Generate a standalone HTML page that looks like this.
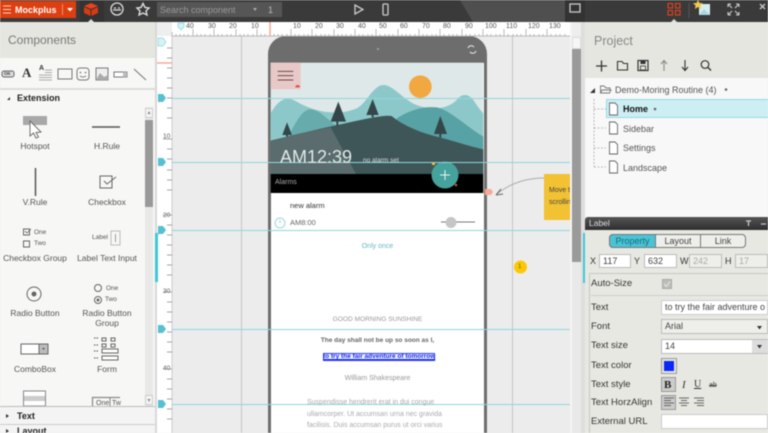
<!DOCTYPE html>
<html><head><meta charset="utf-8">
<style>
html,body{margin:0;padding:0;background:#eee;overflow:hidden;width:768px;height:433px}
#r{position:relative;width:768px;height:433px;overflow:hidden;font-family:"Liberation Sans",sans-serif;font-size:9px;color:#444;filter:blur(.45px)}
.b{position:absolute}
.t{position:absolute;white-space:nowrap;line-height:12px}
.c{position:absolute;white-space:nowrap;line-height:12px;text-align:center;color:#555;font-size:8.5px}
.in{position:absolute;background:#fff;border:1px solid #bbb;box-sizing:border-box;font-size:9px;line-height:12px;padding-left:3px;color:#444;white-space:nowrap;overflow:hidden}
svg{position:absolute;left:0;top:0}
.lb{position:absolute;left:591px;white-space:nowrap;font-size:9.5px;line-height:12px;color:#333}
.rl{position:absolute;top:22px;font-size:7px;line-height:10px;color:#555;white-space:nowrap}
.rv{position:absolute;left:163px;font-size:6.5px;line-height:8px;color:#555}
</style></head><body><div id="r">

<!-- top bar -->
<div class="b" style="left:0;top:0;width:768px;height:22px;background:#3a3a3a"></div>
<div class="b" style="left:460px;top:0;width:105px;height:22px;background:#4f4f4f;clip-path:polygon(0 0,100% 0,100% 100%,13px 100%)"></div>
<div class="b" style="left:565px;top:0;width:20px;height:22px;background:#333"></div>
<div class="b" style="left:0;top:1px;width:76px;height:17px;background:#dd3f10"></div>
<div class="b" style="left:62px;top:4px;width:1px;height:11px;background:#f09070"></div>
<div class="t" style="left:15px;top:4px;color:#fff;font-weight:bold;font-size:9px">Mockplus</div>
<div class="b" style="left:80px;top:0;width:24px;height:22px;background:#333"></div>
<div class="b" style="left:157px;top:2px;width:103px;height:15px;background:#565656"></div>
<div class="t" style="left:160px;top:4px;color:#999;font-size:9px">Search component</div>
<div class="b" style="left:260px;top:2px;width:22px;height:15px;background:#555"></div>
<div class="t" style="left:268px;top:4px;color:#bbb;font-size:9px">1</div>

<!-- left panel -->
<div class="b" style="left:0;top:22px;width:155px;height:411px;background:#f7f7f5"></div>
<div class="b" style="left:0;top:22px;width:155px;height:36px;background:#e6e6e0"></div>
<div class="t" style="left:8px;top:33px;font-size:12px;line-height:14px;color:#777">Components</div>
<div class="b" style="left:0;top:88px;width:155px;height:2px;background:#ddd"></div>
<div class="t" style="left:17px;top:92px;font-weight:bold;color:#222;font-size:9px">Extension</div>
<div class="b" style="left:145px;top:107px;width:8px;height:299px;background:#e8e8e6"></div>
<div class="b" style="left:145px;top:120px;width:8px;height:87px;background:#999"></div>
<div class="b" style="left:145px;top:108px;width:8px;height:10px;background:#f4f4f4;border:1px solid #ccc;box-sizing:border-box"></div>
<div class="b" style="left:145px;top:395px;width:8px;height:10px;background:#f4f4f4;border:1px solid #ccc;box-sizing:border-box"></div>

<div class="c" style="left:0;top:140px;width:70px">Hotspot</div>
<div class="c" style="left:72px;top:140px;width:70px">H.Rule</div>
<div class="c" style="left:0;top:196px;width:70px">V.Rule</div>
<div class="c" style="left:72px;top:196px;width:70px">Checkbox</div>
<div class="c" style="left:0;top:252px;width:70px">Checkbox Group</div>
<div class="c" style="left:72px;top:252px;width:70px">Label Text Input</div>
<div class="c" style="left:0;top:307px;width:70px">Radio Button</div>
<div class="c" style="left:72px;top:307px;width:70px">Radio Button</div>
<div class="c" style="left:72px;top:317px;width:70px">Group</div>
<div class="c" style="left:0;top:363px;width:70px">ComboBox</div>
<div class="c" style="left:72px;top:363px;width:70px">Form</div>
<div class="t" style="left:34px;top:227px;font-size:6.5px;color:#555">One</div>
<div class="t" style="left:34px;top:238px;font-size:6.5px;color:#555">Two</div>
<div class="t" style="left:92px;top:232px;font-size:6.5px;color:#555">Label</div>
<div class="t" style="left:106px;top:283px;font-size:6.5px;color:#555">One</div>
<div class="t" style="left:105px;top:294px;font-size:6.5px;color:#555">Two</div>

<!-- component toolbar and grid icons -->
<svg width="768" height="433" viewBox="0 0 768 433">
<rect x="2" y="71" width="12" height="6" rx="2" fill="#ddd" stroke="#666"/>
<rect x="58" y="69" width="14" height="10" fill="none" stroke="#777"/>
<rect x="77" y="68" width="12" height="12" rx="3" fill="none" stroke="#777"/>
<circle cx="80.5" cy="72.5" r=".8" fill="#666"/><circle cx="85.5" cy="72.5" r=".8" fill="#666"/>
<path d="M80 76Q83 78 86 76" fill="none" stroke="#666" stroke-width=".8"/>
<rect x="96" y="68" width="12" height="12" fill="#eee" stroke="#777"/>
<path d="M96 80L100 73L104 77L108 75V80Z" fill="#aaa"/>
<rect x="114" y="72" width="13" height="5" fill="#fff" stroke="#777"/>
<rect x="123" y="72" width="4" height="5" fill="#bbb"/>
<path d="M134 69L146 80" stroke="#777" stroke-width="1"/>
<path d="M45 70H52M45 72.5H52M39 75H52M39 77.5H52M39 80H52" stroke="#aaa" stroke-width="1"/>
<path d="M7 100L10 97V100Z" fill="#333"/>
<rect x="23" y="116" width="24" height="9" fill="#a8a8a8"/>
<path d="M30 121V136L33.5 133L36 138L38.5 137L36 132.5L41 132Z" fill="#fff" stroke="#666" stroke-width=".9"/>
<path d="M92 127H120" stroke="#555" stroke-width="1.5"/>
<path d="M35.5 168V196" stroke="#555" stroke-width="1.5"/>
<rect x="100" y="176" width="12" height="12" fill="none" stroke="#666"/>
<path d="M104 181L107 184L116 177" fill="none" stroke="#666" stroke-width="1"/>
<rect x="23.5" y="229" width="6" height="6" fill="none" stroke="#666"/><path d="M25 231L27 233L31 229" fill="none" stroke="#666" stroke-width=".8"/>
<rect x="23.5" y="241" width="6" height="6" fill="none" stroke="#666"/>
<rect x="111" y="231" width="9" height="14" fill="none" stroke="#bbb"/><path d="M115.5 234V242" stroke="#999"/>
<circle cx="34" cy="294" r="7" fill="none" stroke="#666"/><circle cx="34" cy="294" r="2.5" fill="#666"/>
<circle cx="98" cy="288" r="3.5" fill="none" stroke="#666"/>
<circle cx="98" cy="300" r="3.5" fill="none" stroke="#666"/><circle cx="98" cy="300" r="1.5" fill="#666"/>
<rect x="21" y="344" width="27" height="10" fill="#fff" stroke="#666"/><rect x="39" y="344" width="9" height="10" fill="#bbb" stroke="#666"/>
<path d="M42 348H45L43.5 350Z" fill="#555"/>
<path d="M94 338H98M94 345H98M94 351H98M94 358H98" stroke="#555" stroke-width="1" stroke-dasharray="1.5 1"/>
<rect x="102" y="338" width="4" height="3" fill="none" stroke="#666"/><rect x="111" y="338" width="4" height="3" fill="none" stroke="#666"/>
<rect x="102" y="344" width="4" height="3" fill="none" stroke="#666"/><rect x="111" y="344" width="4" height="3" fill="none" stroke="#666"/>
<rect x="102" y="349" width="16" height="4" fill="#fff" stroke="#666"/>
<rect x="102" y="356" width="16" height="4" fill="#fff" stroke="#666"/>
<rect x="23.5" y="391" width="22" height="15" fill="#fff" stroke="#888"/><rect x="24" y="396" width="21" height="5" fill="#ccc"/>
<path d="M92.5 406V397.5H120" fill="none" stroke="#888" stroke-width="1.2"/>
<path d="M110 398V406" stroke="#888"/>
<path d="M147.5 114L149 111L150.5 114Z" fill="#888"/>
<path d="M147.5 399L149 402L150.5 399Z" fill="#888"/>
</svg>
<div class="t" style="left:96px;top:398px;font-size:7px;color:#555;height:8px;overflow:hidden">One</div>
<div class="t" style="left:112px;top:398px;font-size:7px;color:#555;height:8px;overflow:hidden">Tw</div>

<div class="b" style="left:0;top:406px;width:155px;height:1px;background:#bbb"></div>
<div class="b" style="left:0;top:407px;width:155px;height:17px;background:#f4f4f4"></div>
<div class="b" style="left:0;top:424px;width:155px;height:1px;background:#ccc"></div>
<div class="b" style="left:0;top:425px;width:155px;height:8px;background:#f4f4f4"></div>
<div class="t" style="left:17px;top:410px;font-weight:bold;color:#222">Text</div>
<div class="t" style="left:17px;top:425px;font-weight:bold;color:#222;height:8px;overflow:hidden">Layout</div>

<div class="b" style="left:155px;top:22px;width:2px;height:411px;background:#d8d8d8"></div>

<!-- canvas -->
<div class="b" style="left:157px;top:22px;width:415px;height:411px;background:#ececec"></div>
<div class="b" style="left:157px;top:22px;width:15px;height:411px;background:#fff"></div>
<div class="b" style="left:157px;top:22px;width:415px;height:14px;background:#fff"></div>
<div class="b" style="left:157px;top:22px;width:15px;height:14px;background:#eee"></div>
<div class="b" style="left:241px;top:36px;width:1px;height:397px;background:#c4c4c4"></div>
<div class="b" style="left:512px;top:36px;width:1px;height:397px;background:#c4c4c4"></div>

<!-- ruler labels -->
<div class="rl" style="left:186px">40</div>
<div class="rl" style="left:208px">30</div>
<div class="rl" style="left:229px">20</div>
<div class="rl" style="left:251px">10</div>
<div class="rl" style="left:293px">10</div>
<div class="rl" style="left:315px">20</div>
<div class="rl" style="left:336px">30</div>
<div class="rl" style="left:358px">40</div>
<div class="rl" style="left:379px">50</div>
<div class="rl" style="left:400px">60</div>
<div class="rl" style="left:422px">70</div>
<div class="rl" style="left:443px">80</div>
<div class="rl" style="left:465px">90</div>
<div class="rl" style="left:485px">100</div>
<div class="rl" style="left:506px">110</div>
<div class="rl" style="left:528px">120</div>
<div class="rl" style="left:549px">130</div>
<div class="rv" style="top:133px">10</div>
<div class="rv" style="top:212px">20</div>
<div class="rv" style="top:288px">30</div>
<div class="rv" style="top:365px">40</div>

<!-- phone -->
<div class="b" style="left:268px;top:36px;width:219px;height:397px;background:#6d6d6d;border-radius:18px 18px 0 0"></div>
<div class="b" style="left:271px;top:63px;width:213px;height:370px;background:#fff"></div>
<div class="b" style="left:377px;top:48px;width:2px;height:2px;background:#aaa;border-radius:50%"></div>

<svg width="768" height="433" viewBox="0 0 768 433">
<!-- ruler ticks -->
<path d="M172 36H570" stroke="#bbb" stroke-width="1"/>
<path d="M172 36V32M176 36V34M180 36V34M184 36V34M188 36V34M193 36V29M197 36V34M201 36V34M205 36V34M210 36V34M214 36V29M218 36V34M222 36V34M227 36V34M231 36V34M236 36V29M240 36V34M244 36V34M248 36V34M253 36V34M257 36V29M261 36V34M265 36V34M270 36V34M274 36V34M278 36V34M282 36V34M287 36V34M291 36V29M295 36V34M299 36V34M304 36V34M308 36V34M312 36V29M316 36V34M321 36V34M325 36V34M329 36V34M334 36V29M338 36V34M342 36V34M346 36V34M351 36V34M355 36V29M359 36V34M363 36V34M368 36V34M372 36V34M376 36V29M380 36V34M385 36V34M389 36V34M393 36V34M398 36V29M402 36V34M406 36V34M410 36V34M415 36V34M419 36V29M423 36V34M427 36V34M432 36V34M436 36V34M440 36V29M444 36V34M449 36V34M453 36V34M457 36V34M462 36V29M466 36V34M470 36V34M475 36V34M479 36V34M483 36V29M487 36V34M491 36V34M496 36V34M500 36V34M504 36V29M508 36V34M513 36V34M517 36V34M521 36V34M526 36V29M530 36V34M534 36V34M539 36V34M543 36V34M547 36V29M551 36V34M556 36V34M560 36V34M565 36V34" stroke="#aaa" stroke-width=".8"/>
<path d="M270 22V36" stroke="#f7a898" stroke-width="1.5"/>
<path d="M172 36V433" stroke="#ccc"/>
<path d="M167 48H172M167 58H172M167 68H172M167 78H172M167 88H172M167 98H172M167 108H172M167 118H172M163 139H172M167 149H172M167 159H172M167 170H172M167 180H172M167 190H172M163 215H172M167 225H172M167 235H172M167 245H172M167 255H172M167 265H172M167 275H172M163 292H172M167 302H172M167 312H172M167 322H172M167 332H172M167 342H172M167 352H172M163 369H172M167 379H172M167 389H172M167 399H172M167 409H172M167 419H172" stroke="#888" stroke-width=".8"/>
<path d="M157 63H172" stroke="#f7a898" stroke-width="1.5"/>

<!-- artwork -->
<g transform="translate(260,30) scale(.3333)">
<rect x="32" y="98" width="638" height="334" fill="#dfe8e8"/>
<circle cx="481" cy="170" r="34" fill="#f2a840"/>
<path d="M32 250C60 200 85 200 110 215C160 245 230 260 290 235C320 220 340 165 370 165C400 165 430 210 470 225C510 240 560 240 590 210C605 190 625 190 640 210C650 225 660 240 670 250V432H32Z" fill="#8cc8ca"/>
<path d="M85 320C110 270 130 235 155 238C185 242 205 275 250 300V432H85Z" fill="#68abad"/>
<path d="M410 265C450 240 490 228 530 232C570 240 620 290 670 320V432H410Z" fill="#57a2a4"/>
<path d="M32 332C120 310 230 285 310 268C350 260 380 255 395 258C420 280 470 305 530 320C590 335 630 350 670 358V432H32Z" fill="#3f5658"/>
<path d="M32 332C90 318 150 303 212 292L288 432H32Z" fill="#5a6c6d"/>
<path d="M232 288V270M338 262V250M541 322V308M81 320V310" stroke="#33464a" stroke-width="6"/>
<path d="M235 215L212 275H258Z" fill="#33464a"/>
<path d="M338 207L319 255H356Z" fill="#33464a"/>
<path d="M541 258L522 312H561Z" fill="#33464a"/>
<path d="M81 277L67 315H96Z" fill="#33464a"/>
<rect x="32" y="98" width="90" height="80" fill="#eac4c4" fill-opacity=".9"/>
<path d="M53 124H100M53 137H100M53 150H100" stroke="#6b4a4a" stroke-width="3"/>
<path d="M106 172a7 7 0 0 1 14 0Z" fill="#d8533c"/>
<rect x="32" y="432" width="638" height="57" fill="#000"/>
</g>
<!-- fab -->
<circle cx="445" cy="175" r="13.5" fill="#46a29c"/>
<path d="M440 175H450M445 170V180" stroke="#e8f6f4" stroke-width="1"/>
<rect x="432" y="162" width="3" height="3" fill="#f2c020"/>
<circle cx="456" cy="185" r="1.3" fill="#d8433c"/>
<!-- clock + slider -->
<circle cx="280" cy="223" r="5" fill="none" stroke="#9fd6dc"/>
<path d="M280 220V223" stroke="#9fd6dc"/>
<path d="M441 222H475" stroke="#777" stroke-width="1"/>
<circle cx="451" cy="222.5" r="5.5" fill="#c6c6c6"/>

<!-- guides -->
<path d="M172 98.5H570M172 162.5H570M172 230.5H570M172 329.5H570M172 404.5H570" stroke="#8fd6dc" stroke-width="1"/>
<g fill="#56c0d0">
<path d="M158 94H163L166 98L163 102H158Z"/>
<path d="M158 158H163L166 162L163 166H158Z"/>
<path d="M158 226H163L166 230L163 234H158Z"/>
<path d="M158 325H163L166 329L163 333H158Z"/>
<path d="M158 400H163L166 404L163 408H158Z"/>
</g>
<path d="M158 38H163L166 42L163 46H158Z" fill="#d6f2f5" stroke="#8fd6dc" stroke-width=".7"/>
<path d="M178 23V27L181 30L184 27V23Z" fill="#d6f2f5" stroke="#8fd6dc" stroke-width=".7"/>
<rect x="155" y="233" width="3" height="49" fill="#42c8d6"/>

<!-- rotate icon -->
<path d="M468 48a3.5 3.5 0 0 1 6 -1M476 51a3.5 3.5 0 0 1 -6 1" fill="none" stroke="#eee" stroke-width="1"/>

<!-- note arrow -->
<path d="M544 178C525 178 510 184 498 193" fill="none" stroke="#aaa" stroke-width="1"/>
<path d="M496 195L501 189M496 195L503 194" stroke="#666" stroke-width="1"/>
<path d="M485 189H491L493 192L491 195H485Z" fill="#f8a898"/>
<circle cx="520.5" cy="267" r="6.5" fill="#fdc800"/>

<!-- top bar icons -->
<path d="M3 6H11M3 9.5H11M3 13H11" stroke="#fbd0c0" stroke-width="1"/>
<path d="M67 8L73 8L70 11.5Z" fill="#fff"/>
<path d="M91 3L98 6L91 9L84 6Z" fill="#e8421a"/>
<path d="M84 7L90.5 10V16L84 13ZM98 7L91.5 10V16L98 13Z" fill="#d83a14"/>
<path d="M88 22L91 19L94 22Z" fill="#ddd"/>
<circle cx="117" cy="9" r="6" fill="none" stroke="#ddd" stroke-width="1.3"/>
<path d="M113 10H121M114 8H116M118 8H120" stroke="#ddd" stroke-width="1.2"/>
<path d="M143 3.5L145 7.5L149 8L146 11L147 15L143 13L139 15L140 11L137 8L141 7.5Z" fill="none" stroke="#ddd" stroke-width="1.4"/>
<path d="M253 8L257 8L255 11Z" fill="#aaa"/>
<path d="M355 5L355 14L363 9.5Z" fill="none" stroke="#ccc" stroke-width="1.3"/>
<rect x="383" y="4" width="5" height="11" rx="1" fill="none" stroke="#ccc" stroke-width="1.3"/>
<rect x="570" y="4" width="10" height="8" fill="none" stroke="#ccc" stroke-width="1.3"/>
<g fill="none" stroke="#d4431e" stroke-width="1.2">
<rect x="668" y="3.5" width="4.5" height="4.5"/><rect x="675.5" y="3.5" width="4.5" height="4.5"/>
<rect x="668" y="10.5" width="4.5" height="4.5"/><rect x="675.5" y="10.5" width="4.5" height="4.5"/>
</g>
<path d="M671 22L674 19L677 22Z" fill="#ddd"/>
<path d="M689 3V18" stroke="#555"/>
<rect x="699" y="4" width="11" height="11" fill="#d8ecf0"/>
<path d="M699 15L704 9L710 15Z" fill="#a8d8e0"/>
<path d="M698 0L699.5 3L703 3.3L700.5 5.5L701 9L698 7L695 9L695.5 5.5L693 3.3L696.5 3Z" fill="#f2c94a"/>
<path d="M728 4L732 8M728 4H731M728 4V7M739 4L735 8M739 4H736M739 4V7M728 15L732 11M728 15H731M728 15V12M739 15L735 11M739 15H736M739 15V12" stroke="#ccc" stroke-width="1.1" fill="none"/>
<path d="M760 4L765 9M765 4L760 9" stroke="#ccc" stroke-width="1.3"/>
</svg>

<!-- phone content text -->
<div class="t" style="left:280px;top:147px;font-size:18px;line-height:20px;color:#dfe8e8">AM12:39</div>
<div class="t" style="left:363px;top:156px;font-size:6.5px;line-height:10px;color:#d5dddd">no alarm set</div>
<div class="t" style="left:275px;top:178px;font-size:7px;line-height:10px;color:#aaa">Alarms</div>
<div class="t" style="left:290px;top:201px;font-size:7.5px;line-height:10px;color:#333">new alarm</div>
<div class="t" style="left:290px;top:218px;font-size:7.5px;line-height:10px;color:#666">AM8:00</div>
<div class="t" style="left:271px;top:242px;width:213px;text-align:center;font-size:7px;line-height:10px;color:#68b8bc">Only once</div>
<div class="t" style="left:271px;top:315px;width:213px;text-align:center;font-size:6.6px;line-height:10px;color:#999">GOOD MORNING SUNSHINE</div>
<div class="t" style="left:271px;top:336px;width:213px;text-align:center;font-size:6.5px;line-height:10px;color:#666;font-weight:bold">The day shall not be up so soon as I,</div>
<div class="b" style="left:323px;top:353px;width:110px;height:6px;border:1px solid #2a3cff;background:#f2f4ff"></div>
<div class="t" style="left:323px;top:352px;width:112px;text-align:center;font-size:6.5px;line-height:10px;color:#1426f0;font-weight:bold;text-decoration:underline">to try the fair adventure of tomorrow</div>
<div class="t" style="left:271px;top:374px;width:213px;text-align:center;font-size:7px;line-height:10px;color:#999">William Shakespeare</div>
<div class="t" style="left:307px;top:398px;font-size:7px;line-height:10px;color:#aaa">Suspendisse hendrerit erat in dui congue</div>
<div class="t" style="left:307px;top:410px;font-size:7px;line-height:10px;color:#aaa">ullamcorper. Ut accumsan urna nec gravida</div>
<div class="t" style="left:307px;top:421px;font-size:7px;line-height:10px;color:#aaa">facilisis. Duis accumsan purus ut orci varius</div>

<!-- note -->
<div class="b" style="left:544px;top:174px;width:26px;height:46px;background:#f2c232;overflow:hidden">
<div class="t" style="left:5px;top:11px;font-size:7px;line-height:12px;color:#444">Move the<br>scrolling</div></div>

<!-- canvas scrollbar -->
<div class="b" style="left:570px;top:22px;width:2px;height:411px;background:#f4f4f4"></div>
<div class="b" style="left:572px;top:36px;width:9px;height:397px;background:#e9e9e9"></div>
<div class="b" style="left:572px;top:49px;width:9px;height:213px;background:#9a9a9a"></div>
<div class="b" style="left:572px;top:37px;width:9px;height:12px;background:#f6f6f6;border:1px solid #ddd;box-sizing:border-box"></div>
<div class="b" style="left:581px;top:22px;width:4px;height:411px;background:#dedede"></div>
<div class="b" style="left:583px;top:233px;width:2px;height:50px;background:#42c8d6"></div>

<!-- project panel -->
<div class="b" style="left:585px;top:22px;width:183px;height:56px;background:#e6e6e0"></div>
<div class="b" style="left:585px;top:78px;width:183px;height:139px;background:#f8f8f8"></div>
<div class="t" style="left:594px;top:34px;font-size:12.5px;line-height:14px;color:#888">Project</div>
<div class="b" style="left:606px;top:99px;width:162px;height:19px;background:#cdeef2;border:1px solid #93dbe3;box-sizing:border-box;border-right:0"></div>
<div class="t" style="left:615px;top:84px;font-size:9px;color:#555">Demo-Moring Routine (4)</div>
<div class="t" style="left:623px;top:103px;font-size:9px;font-weight:bold;color:#111">Home</div>
<div class="t" style="left:623px;top:123px;font-size:9px;color:#555">Sidebar</div>
<div class="t" style="left:623px;top:142px;font-size:9px;color:#555">Settings</div>
<div class="t" style="left:623px;top:162px;font-size:9px;color:#555">Landscape</div>

<!-- label panel -->
<div class="b" style="left:585px;top:217px;width:183px;height:216px;background:#e8e8e2;border-radius:3px 0 0 0"></div>
<div class="b" style="left:585px;top:217px;width:183px;height:13px;background:linear-gradient(#555,#2e2e2e);border-radius:3px 0 0 0"></div>
<div class="t" style="left:589px;top:218px;font-size:8.5px;line-height:11px;color:#ddd">Label</div>

<!-- tabs -->
<div class="b" style="left:609px;top:234px;width:137px;height:14px;border:1px solid #777;box-sizing:border-box;border-radius:4px;background:#eeeeea;overflow:hidden"></div>
<div class="b" style="left:609px;top:234px;width:47px;height:14px;background:#49c4d6;border:1px solid #777;box-sizing:border-box;border-radius:4px 0 0 4px"></div>
<div class="b" style="left:700px;top:234px;width:1px;height:14px;background:#777"></div>
<div class="t" style="left:609px;top:235px;width:47px;text-align:center;font-size:9px;color:#1b6a78">Property</div>
<div class="t" style="left:656px;top:235px;width:44px;text-align:center;font-size:9px;color:#444">Layout</div>
<div class="t" style="left:700px;top:235px;width:46px;text-align:center;font-size:9px;color:#444">Link</div>

<!-- XYWH -->
<div class="t" style="left:590px;top:255px;font-size:9px;color:#333">X</div>
<div class="in" style="left:599px;top:254px;width:32px;height:14px">117</div>
<div class="t" style="left:634px;top:255px;font-size:9px;color:#333">Y</div>
<div class="in" style="left:644px;top:254px;width:33px;height:14px">632</div>
<div class="t" style="left:680px;top:255px;font-size:9px;color:#333">W</div>
<div class="in" style="left:689px;top:254px;width:33px;height:14px;background:#eeeeea;color:#aaa">242</div>
<div class="t" style="left:725px;top:255px;font-size:9px;color:#333">H</div>
<div class="in" style="left:735px;top:254px;width:33px;height:14px;background:#eeeeea;color:#aaa">17</div>

<div class="b" style="left:589px;top:273px;width:179px;height:160px;border:1px solid #c8c8c2;border-bottom:0;box-sizing:border-box;border-right:0"></div>
<div class="b" style="left:591px;top:295px;width:177px;height:1px;background:#ccc"></div>

<div class="lb" style="top:278px">Auto-Size</div>
<div class="b" style="left:662px;top:279px;width:10px;height:10px;background:#bdbdb8;border:1px solid #aaa;box-sizing:border-box"></div>
<div class="lb" style="top:302px">Text</div>
<div class="in" style="left:661px;top:300px;width:107px;height:15px;border-color:#ccc">to try the fair adventure o</div>
<div class="lb" style="top:321px">Font</div>
<div class="in" style="left:661px;top:319px;width:107px;height:15px;background:#eeeeea;border-color:#bbb">Arial</div>
<div class="lb" style="top:340px">Text size</div>
<div class="in" style="left:661px;top:339px;width:107px;height:15px;border-color:#bbb">14</div>
<div class="b" style="left:752px;top:340px;width:16px;height:13px;background:#ddd"></div>
<div class="lb" style="top:360px">Text color</div>
<div class="b" style="left:661px;top:358px;width:16px;height:16px;background:#e4e4e0;border:1px solid #999;box-sizing:border-box"></div>
<div class="b" style="left:664px;top:361px;width:10px;height:10px;background:#0a28f5"></div>
<div class="lb" style="top:379px">Text style</div>
<div class="b" style="left:661px;top:377px;width:15px;height:15px;background:#ccc;border:1px solid #999;box-sizing:border-box"></div>
<div class="t" style="left:664px;top:379px;font-family:'Liberation Serif',serif;font-weight:bold;font-size:11px;color:#222">B</div>
<div class="t" style="left:682px;top:379px;font-family:'Liberation Serif',serif;font-style:italic;font-size:11px;color:#333">I</div>
<div class="t" style="left:694px;top:379px;font-family:'Liberation Serif',serif;text-decoration:underline;font-size:10px;color:#333">U</div>
<div class="t" style="left:709px;top:380px;font-size:7px;color:#444;text-decoration:line-through">ab</div>
<div class="lb" style="top:397px">Text HorzAlign</div>
<div class="b" style="left:661px;top:395px;width:15px;height:15px;background:#ccc;border:1px solid #999;box-sizing:border-box"></div>
<div class="lb" style="top:416px">External URL</div>
<div class="in" style="left:661px;top:414px;width:107px;height:15px;border-color:#ccc"></div>

<svg width="768" height="433" viewBox="0 0 768 433">
<!-- project toolbar -->
<path d="M596 66H607M601.5 60.5V71.5" stroke="#333" stroke-width="1.3"/>
<path d="M617.5 61.5H622L623.5 63.5H627.5V70H617.5Z" fill="none" stroke="#333" stroke-width="1.1"/>
<rect x="638" y="60.5" width="10" height="10" fill="none" stroke="#333" stroke-width="1.2"/><rect x="640.5" y="61" width="5" height="3" fill="#333"/><rect x="640.5" y="66" width="5" height="4" fill="none" stroke="#333" stroke-width=".8"/>
<path d="M664 71V61M661 64L664 60.5L667 64" fill="none" stroke="#888" stroke-width="1.1"/>
<path d="M685 60V70M682 67L685 70.5L688 67" fill="none" stroke="#333" stroke-width="1.1"/>
<circle cx="705" cy="64.5" r="3.8" fill="none" stroke="#333" stroke-width="1.2"/><path d="M708 67.5L711 70.5" stroke="#333" stroke-width="1.4"/>
<!-- tree -->
<path d="M590 93L595 88V93Z" fill="#333"/>
<path d="M594 109H606M594 128H606M594 148H606M594 167H606M594 99V167" stroke="#aaa" stroke-width=".8" stroke-dasharray="2 1.5" fill="none"/>
<path d="M600.5 93V86H604L606 88H610V90M600.5 93L602 90H611L609.5 93Z" fill="none" stroke="#777" stroke-width=".9"/>
<g fill="#fff" stroke="#666" stroke-width=".9">
<path d="M609.5 103H615L617.5 105.5V115H609.5Z"/>
<path d="M609.5 122H615L617.5 124.5V134H609.5Z"/>
<path d="M609.5 142H615L617.5 144.5V154H609.5Z"/>
<path d="M609.5 161H615L617.5 163.5V173H609.5Z"/>
</g>
<circle cx="726" cy="89.5" r="1.3" fill="#666"/><circle cx="655" cy="109" r="1.3" fill="#666"/>
<!-- label panel icons -->
<path d="M746 221H751M748.5 221V226" stroke="#ccc" stroke-width="1.2"/>
<path d="M761 224H766" stroke="#ccc" stroke-width="1.2"/>
<path d="M664 284L666.5 286.5L670 281.5" fill="none" stroke="#e8e8e8" stroke-width="1"/>
<path d="M757 326H762L759.5 329.5Z" fill="#333"/>
<path d="M757 345H762L759.5 348.5Z" fill="#333"/>
<path d="M664 398H674M664 400.5H671M664 403H674M664 405.5H671" stroke="#666" stroke-width=".9"/>
<path d="M679 398H689M681 400.5H687M679 403H689M681 405.5H687" stroke="#666" stroke-width=".9"/>
<path d="M694 398H704M697 400.5H704M694 403H704M697 405.5H704" stroke="#666" stroke-width=".9"/>
<!-- expand arrows -->
<path d="M6 414L9 416L6 418ZM6 429L9 431L6 433Z" fill="#333"/>
</svg>

<div class="t" style="left:22px;top:66px;font-family:'Liberation Serif',serif;font-weight:bold;font-size:13px;line-height:14px;color:#333">A</div>
<div class="t" style="left:39px;top:65px;font-size:7px;line-height:8px;font-weight:bold;color:#333">A</div>
<div class="t" style="left:4px;top:71px;font-size:4.5px;line-height:5px;font-weight:bold;color:#444">OK</div>
<div class="t" style="left:518px;top:264px;font-size:6px;line-height:7px;color:#654">1</div>
</div></body></html>
